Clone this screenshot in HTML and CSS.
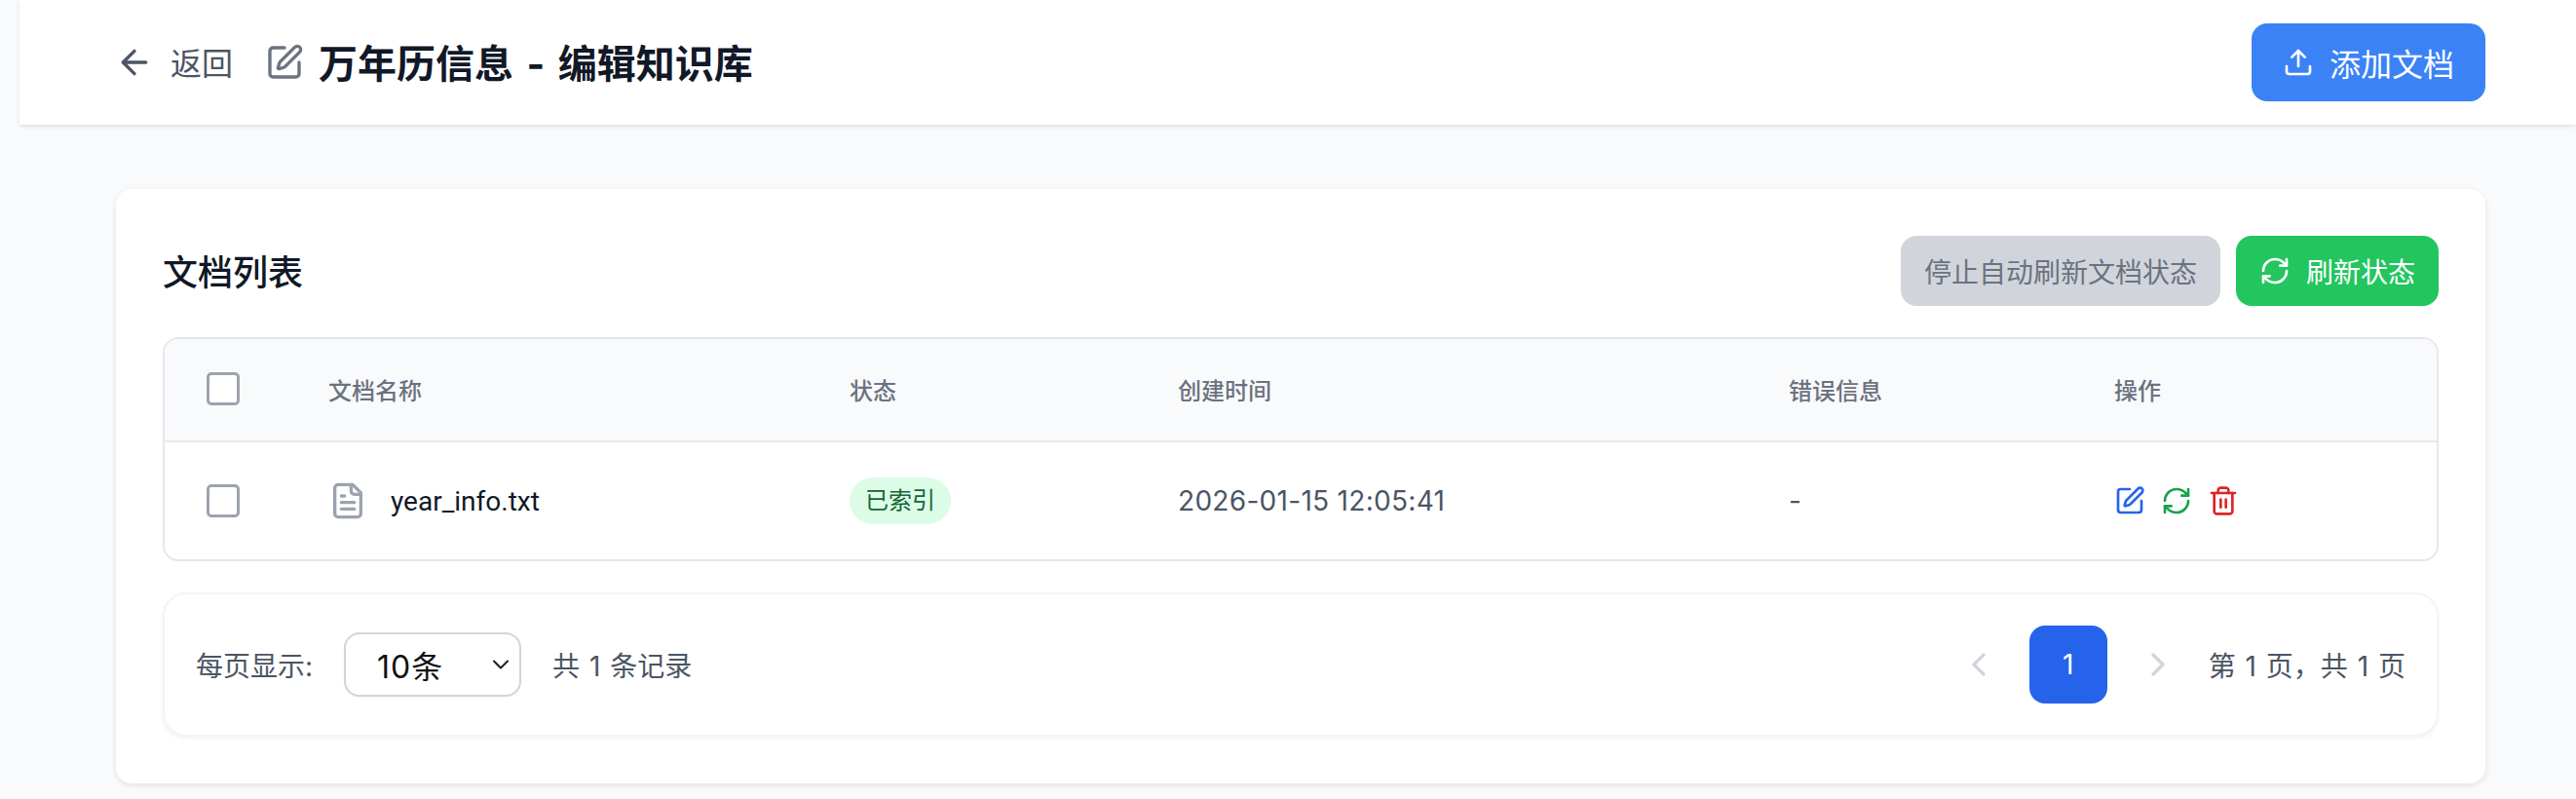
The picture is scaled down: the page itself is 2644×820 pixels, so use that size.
FILE: index.html
```html
<!DOCTYPE html>
<html>
<head>
    <meta charset="utf-8">
    <meta name="viewport" content="width=device-width, initial-scale=1.0">
    <link rel="stylesheet" href="styles.css">
</head>
<body>

<div class="side-strip"></div>

<div class="main">
    <header class="page-header">
        <div class="header-left">
            <a class="back-link" href="#">
                <svg class="icon icon-40" viewBox="0 0 24 24"><path d="m12 19-7-7 7-7"/><path d="M19 12H5"/></svg>
                <span>返回</span>
            </a>
            <svg class="icon icon-40 title-icon" viewBox="0 0 24 24"><path d="M12 3H5a2 2 0 0 0-2 2v14a2 2 0 0 0 2 2h14a2 2 0 0 0 2-2v-7"/><path d="M18.375 2.625a1 1 0 0 1 3 3l-9.013 9.014a2 2 0 0 1-.853.505l-2.873.84a.5.5 0 0 1-.62-.62l.84-2.873a2 2 0 0 1 .506-.852z"/></svg>
            <h1 class="page-title">万年历信息 - 编辑知识库</h1>
        </div>
        <button class="btn btn-add">
            <svg class="icon icon-32" viewBox="0 0 24 24"><path d="M21 15v4a2 2 0 0 1-2 2H5a2 2 0 0 1-2-2v-4"/><path d="M17 8l-5-5-5 5"/><path d="M12 3v12"/></svg>
            <span>添加文档</span>
        </button>
    </header>

    <div class="content">
        <div class="card">
            <div class="card-top">
                <h2 class="card-title">文档列表</h2>
                <div class="card-actions">
                    <button class="btn btn-small btn-gray">停止自动刷新文档状态</button>
                    <button class="btn btn-small btn-green">
                        <svg class="icon icon-32" viewBox="0 0 24 24"><path d="M3 12a9 9 0 0 1 9-9 9.75 9.75 0 0 1 6.74 2.74L21 8"/><path d="M21 3v5h-5"/><path d="M21 12a9 9 0 0 1-9 9 9.75 9.75 0 0 1-6.74-2.74L3 16"/><path d="M8 16H3v5"/></svg>
                        <span>刷新状态</span>
                    </button>
                </div>
            </div>

            <div class="table-wrap">
                <table class="doc-table">
                    <thead>
                        <tr>
                            <th class="col-check"><input type="checkbox" class="check"></th>
                            <th class="col-name">文档名称</th>
                            <th class="col-status">状态</th>
                            <th class="col-date">创建时间</th>
                            <th class="col-error">错误信息</th>
                            <th>操作</th>
                        </tr>
                    </thead>
                    <tbody>
                        <tr>
                            <td class="col-check"><input type="checkbox" class="check"></td>
                            <td>
                                <div class="file-cell">
                                    <svg class="icon icon-40 file-icon" viewBox="0 0 24 24"><path d="M15 2H6a2 2 0 0 0-2 2v16a2 2 0 0 0 2 2h12a2 2 0 0 0 2-2V7Z"/><path d="M14 2v4a2 2 0 0 0 2 2h4"/><path d="M10 9H8"/><path d="M16 13H8"/><path d="M16 17H8"/></svg>
                                    <span class="file-name">year_info.txt</span>
                                </div>
                            </td>
                            <td><span class="badge">已索引</span></td>
                            <td class="date-cell">2026-01-15 12:05:41</td>
                            <td class="error-cell">-</td>
                            <td>
                                <div class="row-actions">
                                    <svg class="icon icon-32 text-blue" viewBox="0 0 24 24"><path d="M12 3H5a2 2 0 0 0-2 2v14a2 2 0 0 0 2 2h14a2 2 0 0 0 2-2v-7"/><path d="M18.375 2.625a1 1 0 0 1 3 3l-9.013 9.014a2 2 0 0 1-.853.505l-2.873.84a.5.5 0 0 1-.62-.62l.84-2.873a2 2 0 0 1 .506-.852z"/></svg>
                                    <svg class="icon icon-32 text-green" viewBox="0 0 24 24"><path d="M3 12a9 9 0 0 1 9-9 9.75 9.75 0 0 1 6.74 2.74L21 8"/><path d="M21 3v5h-5"/><path d="M21 12a9 9 0 0 1-9 9 9.75 9.75 0 0 1-6.74-2.74L3 16"/><path d="M8 16H3v5"/></svg>
                                    <svg class="icon icon-32 text-red" viewBox="0 0 24 24"><path d="M3 6h18"/><path d="M19 6v14c0 1-1 2-2 2H7c-1 0-2-1-2-2V6"/><path d="M8 6V4c0-1 1-2 2-2h4c1 0 2 1 2 2v2"/><path d="M10 11v6"/><path d="M14 11v6"/></svg>
                                </div>
                            </td>
                        </tr>
                    </tbody>
                </table>
            </div>

            <div class="pager">
                <div class="pager-left">
                    <span>每页显示:</span>
                    <div class="page-size">
                        <span>10条</span>
                        <svg class="icon size-arrow" viewBox="0 0 24 24"><path d="m6 9 6 6 6-6"/></svg>
                    </div>
                    <span>共 1 条记录</span>
                </div>
                <div class="pager-right">
                    <svg class="icon icon-40 pager-arrow" viewBox="0 0 24 24"><path d="m15 18-6-6 6-6"/></svg>
                    <span class="page-num">1</span>
                    <svg class="icon icon-40 pager-arrow" viewBox="0 0 24 24"><path d="m9 18 6-6-6-6"/></svg>
                    <span class="page-info">第 1 页，共 1 页</span>
                </div>
            </div>
        </div>
    </div>
</div>

</body>
</html>
```

FILE: styles.css
```css
* {
    box-sizing: border-box;
}

body {
    display: flex;
    margin: 0;
    height: 820px;
    overflow: hidden;
    font-family: Inter, "Noto Sans CJK SC", sans-serif;
    background-color: #f9fafb;
    color: #111827;
}

.side-strip {
    width: 20px;
    flex-shrink: 0;
    background-color: #f8fafc;
}

.main {
    flex: 1;
    min-width: 0;
}

.icon {
    flex-shrink: 0;
    fill: none;
    stroke: currentColor;
    stroke-width: 2;
    stroke-linecap: round;
    stroke-linejoin: round;
}

.icon-32 {
    width: 32px;
    height: 32px;
}

.icon-40 {
    width: 40px;
    height: 40px;
}

.page-header {
    display: flex;
    justify-content: space-between;
    align-items: center;
    height: 128px;
    padding: 0 93px 0 98px;
    background-color: #fff;
    box-shadow: 0 2px 4px rgba(0, 0, 0, 0.1);
}

.header-left {
    display: flex;
    align-items: center;
}

.back-link {
    display: flex;
    align-items: center;
    gap: 17px;
    font-size: 32px;
    color: #4b5563;
    text-decoration: none;
}

.back-link span {
    margin-bottom: 2px;
}

.title-icon {
    margin-left: 33px;
    margin-right: 15px;
    color: #6b7280;
}

.page-title {
    margin: 0 0 2px;
    font-size: 40px;
    font-weight: 700;
    word-spacing: 4px;
    color: #111827;
}

.btn {
    display: flex;
    align-items: center;
    gap: 16px;
    border: none;
    border-radius: 16px;
    font-family: inherit;
    color: #fff;
}

.btn-add {
    height: 80px;
    padding: 0 32px;
    font-size: 32px;
    background-color: #3b82f6;
}

.btn-small {
    height: 72px;
    padding: 0 24px;
    font-size: 28px;
}

.btn-gray {
    background-color: #d1d5db;
    color: #6b7280;
}

.btn-green {
    background-color: #22c55e;
}

.content {
    padding: 66px 93px 0 99px;
}

.card {
    padding: 48px;
    background-color: #fff;
    border-radius: 16px;
    box-shadow: 0 2px 6px rgba(0, 0, 0, 0.1);
}

.card-top {
    display: flex;
    justify-content: space-between;
    align-items: center;
    margin-bottom: 32px;
}

.card-title {
    margin: 0 0 2px;
    font-size: 36px;
    font-weight: 500;
    color: #111827;
}

.card-actions {
    display: flex;
    gap: 16px;
}

.table-wrap {
    border: 2px solid #e5e7eb;
    border-radius: 16px;
    overflow: hidden;
}

.doc-table {
    width: 100%;
    border-collapse: collapse;
    table-layout: fixed;
}

.doc-table th {
    height: 105px;
    padding: 0 0 2px 32px;
    text-align: left;
    font-size: 24px;
    font-weight: 500;
    color: #6b7280;
    background-color: #f9fafb;
    border-bottom: 2px solid #e5e7eb;
}

.doc-table td {
    height: 121px;
    padding: 0 0 0 32px;
    font-size: 28px;
    color: #4b5563;
}

.doc-table .col-check {
    width: 136px;
    padding-left: 43px;
}

.col-name {
    width: 535px;
}

.col-status {
    width: 337px;
}

.col-date {
    width: 627px;
}

.col-error {
    width: 334px;
}

.date-cell {
    letter-spacing: 0.3px;
}

.error-cell {
    color: #6b7280;
}

.check {
    display: block;
    width: 34px;
    height: 34px;
    margin: 0;
    border: 3px solid #9ca3af;
    border-radius: 5px;
    background-color: #fff;
    appearance: none;
}

.file-cell {
    display: flex;
    align-items: center;
    gap: 24px;
}

.file-icon {
    color: #9ca3af;
}

.file-name {
    font-family: Roboto, "Noto Sans CJK SC", sans-serif;
    font-weight: 400;
    color: #111827;
}

.badge {
    display: inline-block;
    padding: 6px 16px;
    border-radius: 24px;
    font-size: 24px;
    line-height: 36px;
    color: #166534;
    background-color: #dcfce7;
}

.row-actions {
    display: flex;
    gap: 16px;
}

.text-blue {
    color: #2563eb;
}

.text-green {
    color: #16a34a;
}

.text-red {
    color: #dc2626;
}

.pager {
    display: flex;
    justify-content: space-between;
    align-items: center;
    margin-top: 32px;
    padding: 32px;
    border: 2px solid #f3f4f6;
    border-radius: 24px;
    background-color: #fff;
    box-shadow: 0 2px 4px rgba(0, 0, 0, 0.05);
    font-size: 28px;
    word-spacing: 2px;
    color: #4b5563;
}

.pager-left {
    display: flex;
    align-items: center;
    gap: 32px;
}

.page-size {
    display: flex;
    justify-content: space-between;
    align-items: center;
    width: 182px;
    height: 66px;
    padding: 0 5px 0 32px;
    border: 2px solid #d1d5db;
    border-radius: 16px;
    background-color: #fff;
    box-shadow: 0 1px 2px rgba(0, 0, 0, 0.05);
    font-size: 32px;
    letter-spacing: 1px;
    color: #111;
}

.size-arrow {
    width: 28px;
    height: 28px;
    stroke-width: 1.8;
    color: #222;
}

.pager-right {
    display: flex;
    align-items: center;
    gap: 32px;
}

.pager-arrow {
    color: #d1d5db;
}

.page-num {
    display: flex;
    justify-content: center;
    align-items: center;
    width: 80px;
    height: 80px;
    border-radius: 16px;
    color: #fff;
    background-color: #2563eb;
}
```
